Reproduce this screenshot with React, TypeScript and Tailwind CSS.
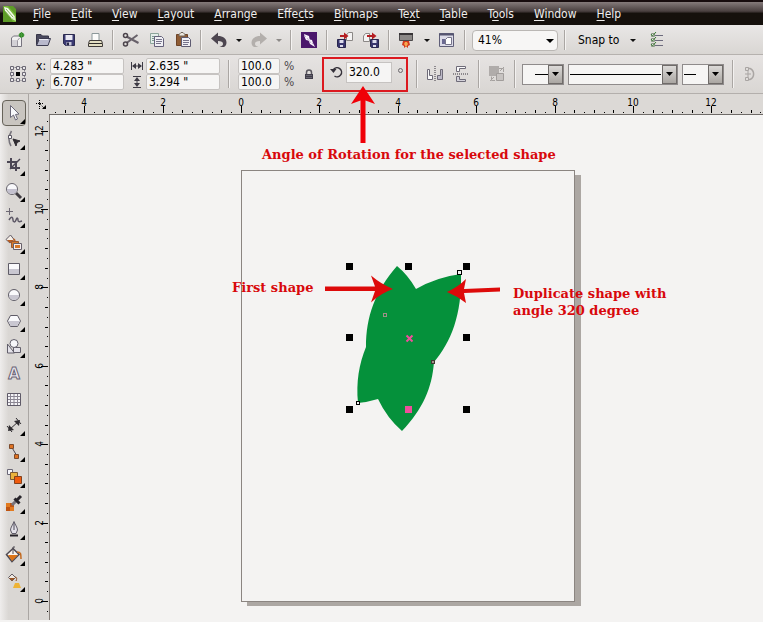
import type { ReactNode } from 'react';

const MENUS = [
  'File',
  'Edit',
  'View',
  'Layout',
  'Arrange',
  'Effects',
  'Bitmaps',
  'Text',
  'Table',
  'Tools',
  'Window',
  'Help',
];

// Index of the underlined access key in each menu name
const ACCESS_KEYS: Record<string, number> = { Effects: 4, Text: 2, Tools: 1 };

const UI_FONT = "font-['DejaVu_Sans_Condensed','DejaVu_Sans',sans-serif]";

function Glyph({ children }: { children: ReactNode }) {
  return (
    <svg
      width="18"
      height="18"
      viewBox="0 0 18 18"
      fill="none"
      className="shrink-0"
      aria-hidden="true"
    >
      {children}
    </svg>
  );
}

function ToolButton({ label, children }: { label: string; children: ReactNode }) {
  return (
    <button
      type="button"
      aria-label={label}
      className="flex h-6 w-[26px] shrink-0 items-center justify-center"
    >
      <Glyph>{children}</Glyph>
    </button>
  );
}

function ArrowButton({ label, muted = false }: { label: string; muted?: boolean }) {
  return (
    <button
      type="button"
      aria-label={label}
      className="flex h-6 w-[14px] shrink-0 items-center justify-center"
    >
      <svg width="6" height="3" viewBox="0 0 6 3" aria-hidden="true">
        <path d="M0 0h6L3 3z" fill={muted ? '#8d8a88' : '#111'} />
      </svg>
    </button>
  );
}

function Separator() {
  return (
    <div className="flex w-[10px] shrink-0 justify-center">
      <div className="h-5 w-0.5 border-l border-[#aaa6a3] bg-[#f5f3f2]" />
    </div>
  );
}

function BarSeparator() {
  return <div className="h-7 w-0.5 shrink-0 border-l border-[#aaa6a3] bg-[#f3f1f0]" />;
}

function MenuBar() {
  return (
    <header className="flex h-[25px] shrink-0 items-center overflow-hidden border-t-2 border-[#170c0e] bg-linear-to-b from-[#857b7b] via-[#4a4040] via-40% to-[#15100c] to-50% pl-[3px]">
      <svg
        width="13"
        height="16"
        viewBox="0 0 13 16"
        className="mr-[17px] shrink-0"
        aria-hidden="true"
      >
        <path d="M0 0h10l3 3v13H0z" fill="#5d9b27" />
        <path d="M0 0h5l8 9v7h-3z" fill="#76b637" />
        <path d="M1 1l4 1 7 8.500-3 2.500-7-8z" fill="#f4faec" />
        <path d="M3 3l7 8M2 5l6 7" stroke="#88b95d" />
        <path d="M9 13l3-2.500.8 4.500z" fill="#dcefc8" />
      </svg>
      <nav aria-label="Main menu" className="flex gap-5 text-[12px] text-[#efedec]">
        {MENUS.map((name) => {
          const key = ACCESS_KEYS[name] ?? 0;
          return (
            <button key={name} type="button" className="leading-4">
              {name.slice(0, key)}
              <span className="underline underline-offset-2">{name[key]}</span>
              {name.slice(key + 1)}
            </button>
          );
        })}
      </nav>
    </header>
  );
}

function StandardBar() {
  return (
    <div className="flex h-[30px] shrink-0 items-center overflow-hidden border-b border-[#b5b1ae] bg-linear-to-b from-[#e9e7e6] to-[#d9d6d3] pt-px pl-1">
      <ToolButton label="New">
        <path d="M3.500 7l2-2h6l2 2v8.500h-10z" fill="#f1f0f1" stroke="#77747f" />
        <path d="M4 9h5v6H4z" fill="#d3d1d6" />
        <path d="M9.500 15.500v-6l2-2.500" stroke="#99969f" />
        <circle cx="13.500" cy="4" r="2.500" fill="#27851f" />
        <path d="M10.500 4h6M13.500 1v6" stroke="#4d9b3e" />
      </ToolButton>
      <ToolButton label="Open">
        <path d="M2.500 14V3.500H7L8.500 5h6v4" fill="#4b4a5f" stroke="#373649" />
        <path d="M2.500 14.500l3-7h11l-2.500 7z" fill="#b9b9cc" stroke="#3c3b50" />
        <path d="M5 8.500h9" stroke="#ececf4" />
      </ToolButton>
      <ToolButton label="Save">
        <path d="M3.500 3.500h11v11h-9l-2-2z" fill="#3b3a72" stroke="#2c2b50" />
        <path d="M5.500 4h7v5h-7z" fill="#e9e8f3" />
        <path d="M6.500 11h5v3.500h-5z" fill="#c9c8da" />
        <path d="M7 11.500h2v3H7z" fill="#282745" />
      </ToolButton>
      <ToolButton label="Print">
        <path d="M6 9.500v-7h7v7" fill="#fbfbfa" stroke="#8c989a" />
        <path d="M3.500 9.500h12l1 3v3h-14v-3z" fill="#e4dfc3" stroke="#403b39" />
        <path d="M3 12.500h13" stroke="#302d2b" />
      </ToolButton>
      <Separator />
      <ToolButton label="Cut">
        <path d="M4.500 5.500L16.500 12M4.500 12L15.500 4" stroke="#68616a" strokeWidth="2" />
        <circle cx="3.500" cy="4.500" r="2" stroke="#4b434b" strokeWidth="1.500" />
        <circle cx="3.500" cy="13" r="2" stroke="#4b434b" strokeWidth="1.500" />
      </ToolButton>
      <ToolButton label="Copy">
        <path d="M2.500 2.500h8v10h-8z" fill="#e4eeea" stroke="#8ca59b" />
        <path d="M4 5.500h5M4 7.500h5M4 9.500h5" stroke="#7b988e" />
        <path d="M6.500 5.500h7l2 2v8h-9z" fill="#f0f0f5" stroke="#64617a" />
        <path d="M8 8.500h6M8 10.500h6M8 12.500h5" stroke="#77748b" />
      </ToolButton>
      <ToolButton label="Paste">
        <path d="M2.500 3.500h11v11h-11z" fill="#8f5c34" stroke="#6d4327" />
        <path d="M5 5V3.500l2-2h2l2 2V5z" fill="#efe9e0" stroke="#71655b" />
        <path d="M7.500 6.500h7l2 2v7h-9z" fill="#f0f0f5" stroke="#5e5b71" />
        <path d="M9 9.500h6M9 11.500h6M9 13.500h5" stroke="#77748b" />
      </ToolButton>
      <Separator />
      <ToolButton label="Undo">
        <path
          d="M1 7.500l7-6V5c5 0 8.500 2.500 8.500 6.500 0 2-.9 3.500-2.500 4.500H9.500c3-.8 3.500-2 3.500-3.200 0-2-1.800-2.800-5-2.800v3.500z"
          fill="#4d4650"
        />
      </ToolButton>
      <ArrowButton label="Undo history" />
      <ToolButton label="Redo">
        <path
          d="M17 7.500l-7-6V5c-5 0-8.500 2.500-8.500 6.500 0 2 .9 3.500 2.500 4.500h4.500c-3-.8-3.500-2-3.500-3.200 0-2 1.800-2.800 5-2.800v3.500z"
          fill="#b3afac"
        />
      </ToolButton>
      <ArrowButton label="Redo history" muted />
      <Separator />
      <ToolButton label="Corel Connect">
        <path d="M1 1h16v16H1z" fill="#4b176c" />
        <path d="M4 3l5 2 1 5-4-1-1-2z" fill="#f7f3fa" />
        <path d="M8 8l4 1 1 3 2 4-5-3z" fill="#f7f3fa" />
        <path d="M7 7l4 5M4 5l2 .5M12 12l1 1" stroke="#c9b3d8" />
      </ToolButton>
      <Separator />
      <ToolButton label="Import">
        <path d="M10.500 9.500V4l2-2.500h4v8z" fill="#f4f3f3" stroke="#8b8886" />
        <path d="M4 4h4V1.500L12.500 5 8 8.500V6H4z" fill="#b51e22" />
        <path d="M1.500 8.500h8v8h-7l-1-1z" fill="#39366e" stroke="#29274e" />
        <path d="M3.500 9h4v3h-4zM4 14h3v2H4z" fill="#dedded" />
      </ToolButton>
      <ToolButton label="Export">
        <path d="M1.500 10.500V5l2-2.500h4v8z" fill="#f4f3f3" stroke="#8b8886" />
        <path d="M5 4h5V1.500L14.500 5 10 8.500V6H5z" fill="#b51e22" />
        <path d="M8.500 8.500h8v8h-7l-1-1z" fill="#39366e" stroke="#29274e" />
        <path d="M10.500 9h4v3h-4zM11 14h3v2h-3z" fill="#dedded" />
      </ToolButton>
      <Separator />
      <ToolButton label="Application launcher">
        <path d="M1.500 2.500h13v7h-13z" fill="#8b8887" stroke="#4c494b" />
        <path d="M1 3h14" stroke="#373437" strokeWidth="2" />
        <path d="M5 10h6l1 4-2 1v2l-2-1.500L6 17v-2l-2-1z" fill="#d33a1e" />
        <path d="M7 11h2l1 2-2 3-2-3z" fill="#f7a84e" />
      </ToolButton>
      <ArrowButton label="Applications" />
      <ToolButton label="Welcome screen">
        <path d="M1.500 2.500h14v13h-14z" fill="#dcdbe8" stroke="#5f5e78" />
        <path d="M1 3.500h15" stroke="#555470" strokeWidth="2" />
        <path d="M4 8h4v5H4z" fill="#6b6a92" />
        <path d="M7.500 13.500v-5l2-2h4v7z" fill="#fff" stroke="#76758b" />
      </ToolButton>
      <Separator />
      <div className="relative mx-0.5 shrink-0">
        <select
          aria-label="Zoom level"
          defaultValue="41%"
          className="block h-[21px] w-[86px] appearance-none rounded-sm border border-[#bab7b4] bg-[#f7f6f5] px-[5px] text-[12px] leading-4"
        >
          <option>41%</option>
          <option>100%</option>
        </select>
        <svg
          width="8"
          height="4"
          viewBox="0 0 8 4"
          className="pointer-events-none absolute top-[9px] right-1"
          aria-hidden="true"
        >
          <path d="M0 0h8L4 4z" fill="#000" />
        </svg>
      </div>
      <Separator />
      <button type="button" className="ml-2 w-11 shrink-0 text-left text-[12px] leading-4">
        Snap&nbsp;to
      </button>
      <div className="px-1">
        <ArrowButton label="Snap options" />
      </div>
      <ToolButton label="Options">
        <path d="M7 4.500h8M7 9.500h8M7 14.500h8" stroke="#6c6a7c" />
        <path d="M3.500 2.500h3v3h-3zM3.500 7.500h3v3h-3zM3.500 12.500h3v3h-3z" stroke="#8c9b88" />
        <path d="M3 3l1.500 2L8 1M3 8l1.500 2L8 6M3 13l1.500 2L8 11" stroke="#3c7a35" />
      </ToolButton>
    </div>
  );
}

function ValueInput({ label, value, wide = false }: { label: string; value: string; wide?: boolean }) {
  return (
    <input
      aria-label={label}
      defaultValue={value}
      className={`h-4 rounded-xs border border-[#c6c3c1] bg-[#f6f5f4] pl-0.5 text-[12px] leading-3 ${
        wide ? 'w-[74px]' : 'w-[42px]'
      }`}
    />
  );
}

function LineSelect({ label, wide = false, line }: { label: string; wide?: boolean; line: string }) {
  return (
    <div
      className={`relative flex h-[21px] shrink-0 items-center border border-[#8f8b8b] bg-[#f6f5f4] ${
        wide ? 'w-[110px]' : 'w-[42px]'
      }`}
    >
      <select aria-label={label} className="absolute inset-0 appearance-none opacity-0">
        <option>{label}</option>
      </select>
      <div className="flex-1">
        <div className={`h-px bg-black ${line}`} />
      </div>
      <span className="pointer-events-none flex h-full w-[15px] items-center justify-center border border-[#6f6b69] bg-linear-to-b from-[#dcdad8] to-[#aaa6a2]">
        <svg width="7" height="4" viewBox="0 0 7 4" aria-hidden="true">
          <path d="M0 0h7L3.500 4z" fill="#000" />
        </svg>
      </span>
    </div>
  );
}

function RotationField() {
  return (
    <div className="relative z-10 flex h-[35px] w-[86px] shrink-0 items-center border-2 border-[#dc1a20] pb-1 pl-1.5">
      <svg width="14" height="14" viewBox="0 0 14 14" fill="none" aria-hidden="true">
        <path d="M3.500 4.500a4.500 4.500 0 1 1 1 6.500" stroke="#35313a" strokeWidth="1.500" />
        <path d="M0 4h6.500L3.500 8z" fill="#35313a" />
      </svg>
      <input
        aria-label="Angle of rotation"
        defaultValue="320.0"
        className="ml-0.5 h-[21px] w-[46px] border border-[#c6c3c1] bg-[#f6f5f4] pl-0.5 text-[12px] leading-4"
      />
      <span className="mb-1 ml-1.5 size-[5px] rounded-full border border-[#6b686c]" />
      {/* Callout arrow reaching up from the canvas */}
      <svg
        width="26"
        height="58"
        viewBox="0 0 26 58"
        className="pointer-events-none absolute top-[27px] left-[26px]"
        aria-hidden="true"
      >
        <path d="M13 0l12 18-9.500-3.500V57h-5V14.500L1 18z" fill="#f00008" />
      </svg>
    </div>
  );
}

function PropertyBar() {
  return (
    <div className="flex h-[39px] shrink-0 items-center border-b border-[#b3afac] bg-linear-to-b from-[#e6e3e2] to-[#d9d6d3] pl-[9px]">
      <Glyph>
        <path d="M2.500 2.500h13v13h-13z" stroke="#85828c" strokeDasharray="2 1" />
        <path
          d="M1.500 1.500h3v3h-3zM7.500 1.500h3v3h-3zM13.500 1.500h3v3h-3zM1.500 7.500h3v3h-3zM13.500 7.500h3v3h-3zM1.500 13.500h3v3h-3zM7.500 13.500h3v3h-3zM13.500 13.500h3v3h-3z"
          fill="#e9e7ea"
          stroke="#6c6975"
        />
        <path d="M7 7h4v4H7z" fill="#000" />
      </Glyph>
      <div className="ml-[9px] flex w-[14px] shrink-0 flex-col text-[12px] leading-4">
        <span>x:</span>
        <span>y:</span>
      </div>
      <div className="flex shrink-0 flex-col">
        <ValueInput label="x position" value={'4.283 "'} wide />
        <ValueInput label="y position" value={'6.707 "'} wide />
      </div>
      <div className="mr-0.5 ml-1.5 flex shrink-0 flex-col gap-1">
        <svg width="14" height="12" viewBox="0 0 14 12" fill="none" aria-hidden="true">
          <path d="M1.500 2v8M12.500 2v8M3 6h8" stroke="#3d3a44" />
          <path d="M2 6l4-3v6zM12 6L8 3v6z" fill="#3d3a44" />
        </svg>
        <svg width="14" height="12" viewBox="0 0 14 12" fill="none" aria-hidden="true">
          <path d="M3 .5h8M3 11.500h8M7 3v6" stroke="#3d3a44" />
          <path d="M7 1l3 4H4zM7 11L4 7h6z" fill="#3d3a44" />
        </svg>
      </div>
      <div className="flex shrink-0 flex-col">
        <ValueInput label="Object width" value={'2.635 "'} wide />
        <ValueInput label="Object height" value={'3.294 "'} wide />
      </div>
      <div className="mx-2 shrink-0">
        <BarSeparator />
      </div>
      <div className="flex shrink-0 flex-col">
        <ValueInput label="Horizontal scale" value="100.0" />
        <ValueInput label="Vertical scale" value="100.0" />
      </div>
      <div className="ml-1 flex w-3 shrink-0 flex-col text-[12px] leading-4 text-[#4b484b]">
        <span>%</span>
        <span>%</span>
      </div>
      <button
        type="button"
        aria-label="Lock ratio"
        className="flex w-[26px] shrink-0 justify-center"
      >
        <svg width="10" height="12" viewBox="0 0 10 12" fill="none" aria-hidden="true">
          <path d="M2.500 7V4.500a2.500 2.500 0 0 1 5 0V7" stroke="#5b5860" strokeWidth="1.500" />
          <path d="M1 6h8v5H1z" fill="#413e4b" />
          <path d="M2 7.500h6M2 9.500h6" stroke="#67646f" />
        </svg>
      </button>
      <RotationField />
      <div className="mr-1 ml-2 shrink-0">
        <BarSeparator />
      </div>
      <ToolButton label="Mirror horizontally">
        <path d="M9 1v16" stroke="#38343e" strokeDasharray="1 1" />
        <path d="M1.500 4.500h2v6h3v4h-5z" fill="#fafafa" stroke="#6e6b78" />
        <path d="M16.500 4.500h-2v6h-3v4h5z" fill="#bcb9c7" stroke="#6e6b78" />
      </ToolButton>
      <ToolButton label="Mirror vertically">
        <path d="M1 9h16" stroke="#38343e" strokeDasharray="1 1" />
        <path d="M4.500 1.500h9v2h-6v3h-3z" fill="#fafafa" stroke="#6e6b78" />
        <path d="M4.500 16.500h9v-2h-6v-3h-3z" fill="#d4d2db" stroke="#6e6b78" />
      </ToolButton>
      <div className="mx-1 shrink-0">
        <BarSeparator />
      </div>
      <ToolButton label="To front">
        <path d="M1 1h10v10H1z" fill="#b0acaa" />
        <path d="M8.500 8.500h7v7h-7z" fill="#c7c3c1" stroke="#a19d9b" />
        <path d="M3.500 11.500v4H7M11 3.500h4.500V7M12 6l4-4M6 12l-4 4" stroke="#a5a19f" />
      </ToolButton>
      <div className="mr-1.5 ml-1 shrink-0">
        <BarSeparator />
      </div>
      <div className="flex shrink-0 gap-1">
        <LineSelect label="Start arrowhead" line="ml-3" />
        <LineSelect label="Line style" line="mx-px" wide />
        <LineSelect label="End arrowhead" line="mr-3 ml-px" />
      </div>
      <div className="mr-1 ml-2 shrink-0">
        <BarSeparator />
      </div>
      <ToolButton label="Close curve">
        <path d="M5 3.500h3a6 6 0 0 1 0 11H5" stroke="#a9a5a3" strokeWidth="1.500" />
        <path d="M3.500 2.500h3v3h-3zM3.500 12.500h3v3h-3z" fill="#dedbd9" stroke="#a9a5a3" />
        <path d="M6 6v6M3 9h6" stroke="#a9a5a3" />
      </ToolButton>
    </div>
  );
}

const TOOLS: { name: string; flyout: boolean; icon: ReactNode }[] = [
  {
    name: 'Pick',
    flyout: true,
    icon: <path d="M5.500 1.500v12l3-2.500 2 5 2-1-2-4.500 3.500-.5z" fill="#f8f8fb" stroke="#6b6879" />,
  },
  {
    name: 'Shape',
    flyout: true,
    icon: (
      <>
        <path d="M6.500 1C3 7 3 11 6 16" stroke="#77747c" strokeWidth="1.500" />
        <path d="M3.500 5.500h3v3h-3z" fill="#fff" stroke="#5c5965" />
        <path d="M8 9l7 2-3 1.500-1 3.500z" fill="#2d2a30" stroke="#2d2a30" />
      </>
    ),
  },
  {
    name: 'Crop',
    flyout: true,
    icon: (
      <>
        <path d="M6 2v10h9M2 6h9v9" stroke="#4b4654" strokeWidth="2" />
        <path d="M5 13L15 3" stroke="#4b4654" strokeWidth="1.500" />
      </>
    ),
  },
  {
    name: 'Zoom',
    flyout: true,
    icon: (
      <>
        <path d="M11 11l5 5" stroke="#403c42" strokeWidth="3" />
        <circle cx="7" cy="7" r="5.500" fill="#f8f8fb" stroke="#66636c" />
        <path d="M2 7h10a5 5 0 0 1-10 0z" fill="#c4c1cf" />
      </>
    ),
  },
  {
    name: 'Freehand',
    flyout: true,
    icon: (
      <>
        <path d="M4.500 0v7M1 3.500h7" stroke="#6d6874" />
        <path d="M4 12c3-5 4-2 4 0s2 3 3 0 2-2 2 0 1 2 4 1" stroke="#5d5866" strokeWidth="1.500" />
      </>
    ),
  },
  {
    name: 'Smart fill',
    flyout: true,
    icon: (
      <>
        <path d="M1 5.500L5.500 1 9 5.500 5 9z" fill="#f5eee6" stroke="#625c66" />
        <path d="M2 6h7L5 9zM8 4c3 1 3 3 2 5" fill="#b95c20" />
        <path d="M6.500 7.500h7v6h-7z" fill="#d7792a" stroke="#9a5931" />
        <path d="M8.500 9.500h8v6h-8z" fill="#f5edee" stroke="#66606a" />
        <path d="M10 11h5v3h-5z" fill="#d7792a" />
      </>
    ),
  },
  {
    name: 'Rectangle',
    flyout: true,
    icon: (
      <>
        <path d="M3.500 3.500h11v11h-11z" fill="#fafafc" stroke="#5f5c67" />
        <path d="M4 9h10v5H4z" fill="#c9c7d1" />
      </>
    ),
  },
  {
    name: 'Ellipse',
    flyout: true,
    icon: (
      <>
        <circle cx="9" cy="9" r="5.500" fill="#fafafc" stroke="#5f5c67" />
        <path d="M4 9h10a5 5 0 0 1-10 0z" fill="#c9c7d1" />
      </>
    ),
  },
  {
    name: 'Polygon',
    flyout: true,
    icon: (
      <>
        <path d="M5.500 3.500h7L15.500 9l-3 5.500h-7L2.500 9z" fill="#fafafc" stroke="#5f5c67" />
        <path d="M3 9h12l-3 5H6z" fill="#c9c7d1" />
      </>
    ),
  },
  {
    name: 'Basic shapes',
    flyout: true,
    icon: (
      <>
        <path d="M2.500 6v9h7z" fill="#e4e2e9" stroke="#625f6b" />
        <path d="M8.500 9.500h7v5h-7z" fill="#e4e2e9" stroke="#625f6b" />
        <circle cx="9" cy="5.500" r="4" fill="#f7f7fa" stroke="#625f6b" />
      </>
    ),
  },
  {
    name: 'Text',
    flyout: false,
    icon: (
      <text
        x="9"
        y="15"
        textAnchor="middle"
        fontSize="15"
        fontWeight="bold"
        fontFamily="'DejaVu Sans', sans-serif"
        fill="#eceaf1"
        stroke="#6b6576"
        strokeWidth="1"
      >
        A
      </text>
    ),
  },
  {
    name: 'Table',
    flyout: false,
    icon: (
      <>
        <path d="M2.500 3.500h13v12h-13z" fill="#f5f4f7" stroke="#5f5a68" />
        <path d="M3 6.500h12M3 9.500h12M3 12.500h12M5.500 4v11M9 4v11M12.500 4v11" stroke="#8b8693" />
      </>
    ),
  },
  {
    name: 'Dimension',
    flyout: true,
    icon: (
      <>
        <path d="M4 14L14 5M2 10l5 6M11 2l5 6" stroke="#2f2c30" />
        <path d="M3 15l1-6 5 5zM15 4l-6 1 5 5z" fill="#2f2c30" />
      </>
    ),
  },
  {
    name: 'Connector',
    flyout: true,
    icon: (
      <>
        <path d="M6 4l6 10" stroke="#4a4650" />
        <path d="M4.500 2.500h4v4h-4zM9.500 12.500h4v4h-4z" fill="#de7222" stroke="#7d4b2d" />
      </>
    ),
  },
  {
    name: 'Blend',
    flyout: true,
    icon: (
      <>
        <path d="M2.500 1.500h5v5h-5z" fill="#f5f5fa" stroke="#6b6877" />
        <path d="M5.500 4.500h7v7h-7z" fill="#eab33c" stroke="#7c5a33" />
        <path d="M9.500 8.500h7v7h-7z" fill="#f05a0c" stroke="#81421f" />
      </>
    ),
  },
  {
    name: 'Color eyedropper',
    flyout: true,
    icon: (
      <>
        <path d="M1 9h8v8H1z" fill="#e27a1f" />
        <path d="M1 13h4v4H1zM5 9h4v4H5z" fill="#bf5412" />
        <path d="M7 11l5-5" stroke="#77737c" strokeWidth="3" />
        <path d="M9.500 4.500l5 5M12 6l4-4" stroke="#28252b" strokeWidth="3" />
      </>
    ),
  },
  {
    name: 'Outline pen',
    flyout: true,
    icon: (
      <>
        <path
          d="M9 1.500c1 3 3.500 6 3.500 8.500L11 13.500H7L5.500 10C5.500 7.500 8 4.500 9 1.500z"
          fill="#e3e1e9"
          stroke="#5f5b68"
        />
        <path d="M9 3v7" stroke="#4d4957" />
        <path d="M5 15.500h8" stroke="#26232a" strokeWidth="2" />
      </>
    ),
  },
  {
    name: 'Fill',
    flyout: true,
    icon: (
      <>
        <path d="M1.500 8.500L8 2.500l6 6-7 7z" fill="#f8f4ef" stroke="#4f4a52" strokeWidth="1.500" />
        <path d="M3 9h10l-6 6z" fill="#dc7417" />
        <path d="M8 8V1h2" stroke="#4f4a52" />
        <path d="M12 6c4 0 4 2 4 7" stroke="#c2691f" strokeWidth="1.500" />
      </>
    ),
  },
  {
    name: 'Interactive fill',
    flyout: true,
    icon: (
      <>
        <path d="M3.500 5.500L7 2l3.500 3.500L7 9z" fill="#f0e9e1" stroke="#625d65" />
        <path d="M4 6h6L7 9z" fill="#9c5624" />
        <path d="M10 5c2 0 2 2 1 4" stroke="#8a4a1d" />
        <path d="M8 16l2-5h4l2 5z" fill="#eeb336" />
      </>
    ),
  },
];

function Toolbox() {
  return (
    <aside
      aria-label="Toolbox"
      className="flex w-[29px] shrink-0 flex-col items-center border-r border-[#aaa6a3] bg-linear-to-r from-[#efedec] to-[#dad7d4] to-30% pt-1.5"
    >
      {TOOLS.map((tool, index) => (
        <button
          key={tool.name}
          type="button"
          aria-label={tool.name}
          className={`relative flex h-[26px] w-6 shrink-0 items-center justify-center rounded-sm border ${
            index === 0 ? 'border-[#67635a] bg-[#c9c5c0]' : 'border-transparent'
          }`}
        >
          <Glyph>{tool.icon}</Glyph>
          {tool.flyout && (
            <svg
              width="5"
              height="5"
              viewBox="0 0 5 5"
              className="absolute right-0 bottom-px"
              aria-hidden="true"
            >
              <path d="M5 0v5H0z" fill="#000" />
            </svg>
          )}
        </button>
      ))}
    </aside>
  );
}

// Quarter-unit ruler marks: long on even units, short on halves, dots between
const UNIT = 39.2;
const range = (from: number, to: number) =>
  Array.from({ length: to - from + 1 }, (_, i) => from + i);
const markLength = (n: number) => (n % 8 === 0 ? 7 : n % 2 === 0 ? 3 : 1);

function HorizontalRuler() {
  return (
    <svg width="100%" height="20" aria-hidden="true" className="block">
      {range(-19, 53).map((n) => {
        const x = Math.round(192 + (n * UNIT) / 4);
        const length = markLength(n);
        return (
          <g key={n}>
            <rect x={x} y={19 - length} width="1" height={length} fill="#000" />
            {n % 8 === 0 && (
              <text x={x} y="12" textAnchor="middle" fontSize="10">
                {Math.abs(n / 4)}
              </text>
            )}
          </g>
        );
      })}
    </svg>
  );
}

function VerticalRuler() {
  return (
    <svg width="20" height="100%" aria-hidden="true" className="block">
      {range(-1, 49).map((n) => {
        const y = Math.round(486 - (n * UNIT) / 4);
        const length = markLength(n);
        return (
          <g key={n}>
            <rect x={19 - length} y={y} width={length} height="1" fill="#000" />
            {n % 8 === 0 && (
              <text transform={`translate(14 ${y}) rotate(-90)`} textAnchor="middle" fontSize="10">
                {Math.abs(n / 4)}
              </text>
            )}
          </g>
        );
      })}
    </svg>
  );
}

const HANDLES = [
  [105, 93],
  [164, 93],
  [222, 93],
  [105, 164],
  [222, 164],
  [105, 236],
  [222, 236],
];

function Drawing() {
  return (
    <svg width="100%" height="100%" className="absolute inset-0" aria-hidden="true">
      <g transform="translate(191 55)">
        <path d="M6 431h328V5h6v431H6z" fill="#aca7a3" />
        <rect x="0.500" y="0.500" width="333" height="431" fill="#f4f3f2" stroke="#8b8581" />
        <path
          d="M156 96Q167 105 175 119Q196 107 220 104C221 145 210 172 193 192C191 218 182 239 161 261Q146 248 137 229Q127 232 117 233C115 212 118 194 125 177C125 147 134 121 156 96z"
          fill="#05913b"
        />
        {HANDLES.map(([x, y]) => (
          <rect key={`${x}-${y}`} x={x} y={y} width="7" height="7" fill="#000" />
        ))}
        <rect x="164" y="236" width="7" height="7" fill="#ee4f9b" />
        <path d="M165.500 165.500l6 6M171.500 165.500l-6 6" stroke="#ee4f9b" strokeWidth="2" />
        <rect x="216.500" y="100.500" width="4" height="4" fill="#f4f3f2" stroke="#000" />
        <rect x="115.500" y="231.500" width="3" height="3" fill="#f4f3f2" stroke="#000" />
        <rect x="142.500" y="143.500" width="3" height="3" stroke="#a09087" fill="none" />
        <rect x="190.500" y="190.500" width="3" height="3" stroke="#3d3a31" fill="#a09087" />
        <path d="M84 116.500h50L130 105.500Q140 114 152 119Q140 123 130 132.500L134 121H84z" fill="#dd0a0a" />
        <path d="M259 117.500L223 119L225 109Q217 117 206 122Q216 126 225 133L223 123L259 121.500z" fill="#dd0a0a" />
      </g>
    </svg>
  );
}

function Canvas() {
  return (
    <main className="relative flex-1 overflow-hidden bg-[#f4f3f2] font-['DejaVu_Serif',serif] text-[13px] leading-[17px] font-bold text-[#d8080c]">
      <Drawing />
      <p className="absolute top-[31px] left-[212px] whitespace-nowrap">
        Angle of Rotation for the selected shape
      </p>
      <p className="absolute top-[164px] left-[182px] whitespace-nowrap">First shape</p>
      <p className="absolute top-[170px] left-[463px] whitespace-nowrap">
        Duplicate shape with
        <br />
        angle 320 degree
      </p>
    </main>
  );
}

export default function App() {
  return (
    <div
      className={`flex h-screen flex-col overflow-hidden bg-[#f4f3f2] pb-0.5 text-black ${UI_FONT}`}
    >
      <MenuBar />
      <StandardBar />
      <PropertyBar />
      <div className="flex min-h-0 flex-1">
        <Toolbox />
        <div className="flex min-w-0 flex-1 flex-col">
          <div className="flex h-[21px] shrink-0 bg-[#dcd9d6]">
            <button
              type="button"
              aria-label="Ruler origin"
              className="flex w-5 shrink-0 items-center justify-end"
            >
              <svg width="14" height="14" viewBox="0 0 14 14" fill="none" aria-hidden="true">
                <path d="M1 5.500h8M4.500 2v9" stroke="#000" strokeDasharray="1 1" />
                <path d="M4 5l6 6" stroke="#000" strokeDasharray="1 1" />
                <path d="M11 7v4H7z" fill="#000" />
              </svg>
            </button>
            <div className="min-w-0 flex-1 border-b border-[#6f6b68]">
              <HorizontalRuler />
            </div>
          </div>
          <div className="flex min-h-0 flex-1">
            <div className="w-[21px] shrink-0 overflow-hidden border-r border-[#857e79] bg-[#dcd9d6]">
              <VerticalRuler />
            </div>
            <Canvas />
          </div>
        </div>
      </div>
    </div>
  );
}
